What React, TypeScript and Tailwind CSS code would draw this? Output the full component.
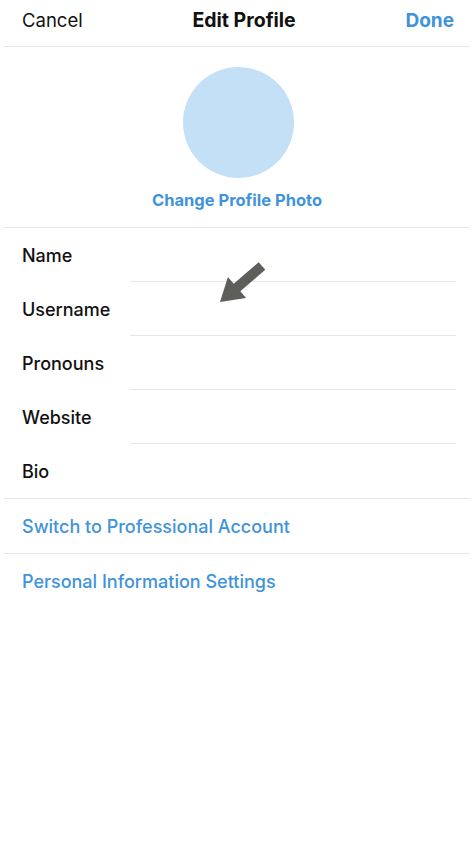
const fields = ["Name", "Username", "Pronouns", "Website", "Bio"];

function Arrow() {
  return (
    <svg
      className="absolute left-0 top-0 pointer-events-none"
      width="474"
      height="400"
      viewBox="0 228 474 400"
    >
      <polygon
        points="265.3,269.8 258.7,262.2 233.7,283.7 227.9,276.9 220,302 246.1,298.1 240.3,291.3"
        fill="#5e5e5b"
      />
    </svg>
  );
}

export default function App() {
  return (
    <div className="w-[474px] h-[849px] bg-white font-['Inter','Liberation_Sans',sans-serif] text-[#111]">
      {/* Header */}
      <div className="mx-[4px] h-[47px] flex items-center justify-between pl-[18px] pr-[16px] pb-[4px] border-b border-[#e6e6e6]">
        <span className="text-[18.5px]">Cancel</span>
        <span className="text-[19.5px] font-bold">Edit Profile</span>
        <span className="text-[19px] font-bold text-[#3f93db]">Done</span>
      </div>

      {/* Avatar */}
      <div className="mx-[4px] flex flex-col items-center pt-[20px] pb-[17px] border-b border-[#e6e6e6]">
        <div className="w-[111px] h-[111px] rounded-full bg-[#c4e0f6] ml-[2px]" />
        <span className="mt-[12px] text-[16.5px] leading-[20px] font-bold text-[#3f93db]">Change Profile Photo</span>
      </div>

      {/* Fields */}
      <div className="relative">
        {fields.map((f, i) => (
          <div key={f} className="flex h-[54px]">
            <div className="w-[130px] pl-[22px] flex items-center text-[18px] font-medium">{f}</div>
            <div
              className={
                i < fields.length - 1
                  ? "flex-1 mr-[18px] border-b border-[#e6e6e6]"
                  : "flex-1 mr-[18px]"
              }
            />
          </div>
        ))}
        <Arrow />
      </div>

      {/* Links */}
      <div className="mx-[4px] border-t border-[#e6e6e6]">
        <div className="h-[55px] flex items-center pl-[18px] border-b border-[#e6e6e6] text-[18px] font-medium text-[#3f93db]">
          Switch to Professional Account
        </div>
        <div className="h-[55px] flex items-center pl-[18px] text-[18px] font-medium text-[#3f93db]">
          Personal Information Settings
        </div>
      </div>
    </div>
  );
}
